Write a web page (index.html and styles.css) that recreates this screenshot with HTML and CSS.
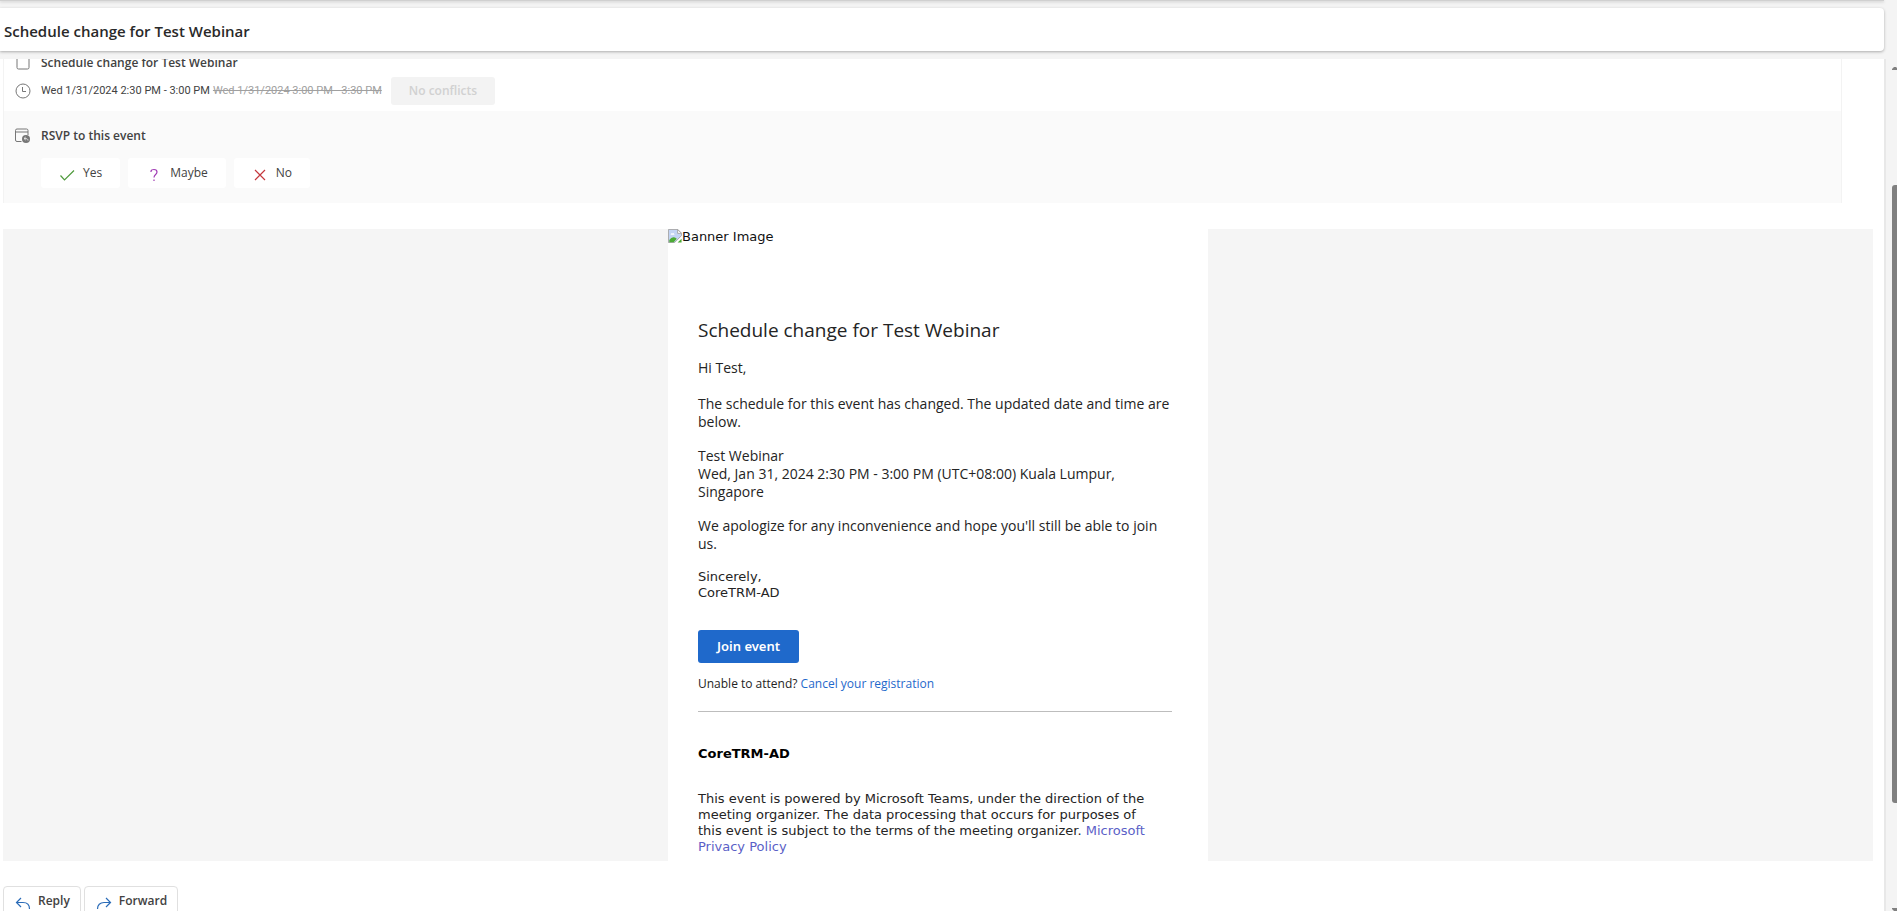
FILE: index.html
```html
<!DOCTYPE html>
<html lang="en">
<head>
<meta charset="utf-8">
<title>Schedule change for Test Webinar</title>
<link rel="stylesheet" href="styles.css">
</head>
<body>
<div class="app">
  <main class="reader">
    <div class="toolbar-edge"></div>
    <header class="subject"><h1>Schedule change for Test Webinar</h1></header>
    <section class="message">
      <div class="event">
        <div class="event-info">
          <div class="row">
            <svg class="icon" width="16" height="16" viewBox="0 0 16 16" fill="none" stroke="#777"><rect x="2" y="1.500" width="12" height="12.500" rx="1.500"/></svg>
            <strong>Schedule change for Test Webinar</strong>
          </div>
          <div class="row row-time">
            <svg class="icon" width="16" height="16" viewBox="0 0 16 16" fill="none" stroke="#777"><circle cx="8" cy="8" r="7"/><path d="M7.500 4v4.500h3.500"/></svg>
            <span class="time">Wed 1/31/2024 2:30 PM - 3:00 PM</span>
            <del class="time">Wed 1/31/2024 3:00 PM - 3:30 PM</del>
            <button class="conflicts" disabled>No conflicts</button>
          </div>
        </div>
        <div class="rsvp">
          <div class="row">
            <svg class="icon" width="16" height="16" viewBox="0 0 16 16" fill="none" stroke="#777"><path d="M6.500 13.500H2A1.500 1.500 0 0 1 .5 12V2.500A1.500 1.500 0 0 1 2 1h9.500A1.500 1.500 0 0 1 13 2.500V7M.5 4H13"/><circle cx="11" cy="11" r="4" fill="#777" stroke="none"/><path d="M13 12.500c0-1.500-1-2-3.500-2M10.700 9l-1.700 1.500 1.700 1.500" stroke="#fafafa" stroke-width=".8"/></svg>
            <strong>RSVP to this event</strong>
          </div>
          <div class="answers">
            <button class="answer"><svg width="16" height="16" viewBox="0 0 16 16" fill="none" stroke="#4f9a3c" stroke-width="1.200"><path d="M1.500 8.500l4 4.500L15 3.500"/></svg>Yes</button>
            <button class="answer"><svg width="16" height="16" viewBox="0 0 16 16" fill="none" stroke="#a03cb4" stroke-width="1.200"><path d="M5 5V4.500C5 2.900 6.300 2.500 8 2.500s3 .7 3 2.500c0 2.500-3 2.500-3 5.500M8 12.500V14"/></svg>Maybe</button>
            <button class="answer"><svg width="16" height="16" viewBox="0 0 16 16" fill="none" stroke="#c4383d" stroke-width="1.200"><path d="M3 3l10 10M13 3l-10 10"/></svg>No</button>
          </div>
        </div>
      </div>
      <div class="mail">
        <article class="letter">
          <div class="banner">
            <svg width="14" height="14" viewBox="0 0 16 16"><path d="M.5.5H11L15.500 5v2.500l-8 8h-7z" fill="#c3d4f5" stroke="#a0a0a0"/><path d="M11 .5V5h4.500z" fill="#fff" stroke="#a0a0a0"/><path d="M3 6.500q.3-2 2-1.500 1.500-1.500 2.500 1.500z" fill="#fff"/><path d="M1.500 15v-2.500Q5 7.500 10 11l-3.500 4z" fill="#4cab35"/><path d="M15.500 11v4.500H11z" fill="#4cab35"/></svg>
            <span>Banner Image</span>
          </div>
          <div class="copy">
            <h2>Schedule change for Test Webinar</h2>
            <p class="greeting">Hi Test,</p>
            <p>The schedule for this event has changed. The updated date and time are below.</p>
            <p>Test Webinar<br>Wed, Jan 31, 2024 2:30 PM - 3:00 PM (UTC+08:00) Kuala Lumpur, Singapore</p>
            <p>We apologize for any inconvenience and hope you'll still be able to join us.</p>
            <p class="signature">Sincerely,<br>CoreTRM-AD</p>
            <a class="join" href="#join">Join event</a>
            <p class="cancel">Unable to attend? <a href="#cancel">Cancel your registration</a></p>
            <hr>
            <p class="org">CoreTRM-AD</p>
            <p class="legal">This event is powered by Microsoft Teams, under the direction of the meeting organizer. The data processing that occurs for purposes of this event is subject to the terms of the meeting organizer. <a href="#privacy">Microsoft Privacy Policy</a></p>
          </div>
        </article>
      </div>
      <div class="actions">
        <button class="action"><svg width="16" height="16" viewBox="0 0 16 16" fill="none" stroke="#2b6cb8" stroke-width="1.200"><path d="M6 3L1.500 7.500 6 12M1.500 7.500H8c4 0 6.500 2.500 6.500 6.500"/></svg>Reply</button>
        <button class="action"><svg width="16" height="16" viewBox="0 0 16 16" fill="none" stroke="#2b6cb8" stroke-width="1.200"><path d="M10 3l4.500 4.500L10 12M14.500 7.500H8c-4 0-6.500 2.500-6.500 6.500"/></svg>Forward</button>
      </div>
    </section>
  </main>
  <div class="scrollbar">
    <svg width="5" height="3" viewBox="0 0 5 3"><path d="M0 3V2l2-2h2l1 1v2z" fill="#808080"/></svg>
    <div class="track"><div class="thumb"></div></div>
    <svg width="5" height="3" viewBox="0 0 5 3"><path d="M0 0v1l2 2h3V0z" fill="#808080"/></svg>
  </div>
</div>
</body>
</html>
```
FILE: styles.css
```css
* { box-sizing: border-box; }

body {
  margin: 0;
  background: #f4f4f4;
  color: #424242;
  font-family: "Open Sans", "Noto Sans", sans-serif;
  font-size: 12px;
}

h1, h2, p { margin: 0; }
button { font: inherit; color: inherit; }
a { text-decoration: none; }
strong { font-weight: 600; }
svg { flex: none; }

.app {
  display: flex;
  height: 100vh;
  overflow: hidden;
}

.reader {
  flex: 1;
  min-width: 0;
  display: flex;
  flex-direction: column;
}

.toolbar-edge {
  height: 1px;
  margin: 0 2px 7px 0;
  background: #d0d0d0;
  box-shadow: 0 1px 3px rgba(0, 0, 0, .25);
}

.subject {
  margin: 0 2px 8px 0;
  padding: 11px 4px 8px;
  background: #fff;
  border-radius: 0 4px 4px 0;
  box-shadow: 0 1px 3px rgba(0, 0, 0, .3);
}

.subject h1 {
  color: #292929;
  font-size: 15px;
  font-weight: 600;
  line-height: 24px;
}

.message {
  flex: 1;
  min-height: 0;
  overflow: hidden;
  padding: 0 11px 0 3px;
  background: #fff;
  border-right: 2px solid #e8e8e8;
}

.event {
  margin: -6px 31px 26px 0;
  border: 1px solid #f3f3f3;
  border-width: 0 1px;
}

.event-info { padding: 0 11px 6px; }

.row {
  display: flex;
  align-items: center;
  line-height: 20px;
}

.icon { margin-right: 10px; }

.row-time { height: 28px; margin-top: 4px; }
.time {
  margin-right: 3px;
  font-family: Roboto, "Open Sans", sans-serif;
  font-size: 11px;
}
del { color: #a0a0a0; }

.conflicts {
  height: 28px;
  margin-left: 6px;
  padding: 0 18px;
  background: #f3f3f3;
  border: 0;
  border-radius: 3px;
  color: #d1d1d1;
  font-weight: 600;
}

.rsvp {
  padding: 15px 11px;
  background: #fafafa;
}

.answers {
  display: flex;
  gap: 8px;
  margin: 12px 0 0 26px;
}

.answer {
  display: flex;
  align-items: center;
  gap: 8px;
  height: 30px;
  padding: 0 18px 2px;
  background: #fff;
  border: 0;
  border-radius: 3px;
}
.answer svg { margin-top: 6px; }

.mail { background: #f5f5f5; }

.letter {
  width: 540px;
  max-width: 100%;
  margin: 0 auto;
  background: #fff;
  color: #242424;
  font-size: 14px;
}

.banner {
  display: flex;
  height: 86px;
  line-height: 16px;
  color: #111;
  font-family: "DejaVu Sans", sans-serif;
  font-size: 13px;
}

.copy { padding: 0 36px 6px 30px; }

.copy h2 {
  font-size: 19px;
  font-weight: 400;
  line-height: 30px;
}

.copy p { margin-bottom: 16px; line-height: 18px; }
.copy .greeting { margin: 14px 0 18px; }

.copy .signature {
  margin-bottom: 29px;
  font-family: "DejaVu Sans", sans-serif;
  font-size: 13px;
  line-height: 16px;
}

.join {
  display: inline-block;
  padding: 0 19px;
  background: #1f69cb;
  border-radius: 3px;
  color: #fff;
  font-family: "Noto Sans", sans-serif;
  font-size: 13px;
  font-weight: 600;
  line-height: 33px;
}

.copy .cancel { margin: 12px 0 18px; font-size: 12px; }
.cancel a { color: #1f69cb; }

hr {
  height: 1px;
  margin: 0;
  border: 0;
  background: #bdbdbd;
}

.copy .org {
  margin: 33px 0 28px;
  color: #000;
  font-family: "DejaVu Sans", sans-serif;
  font-size: 13px;
  font-weight: 700;
}

.copy .legal {
  max-width: 454px;
  margin: 0;
  font-family: "DejaVu Sans", sans-serif;
  font-size: 13px;
  line-height: 16px;
}
.legal a { color: #5b5fc7; }

.actions {
  display: flex;
  gap: 3px;
  margin-top: 25px;
}

.action {
  display: flex;
  align-items: center;
  gap: 7px;
  height: 32px;
  padding: 0 10px 3px 11px;
  background: #fff;
  border: 1px solid #e0e0e0;
  border-radius: 4px;
  font-weight: 600;
}
.action svg { margin-top: 4px; }

.scrollbar {
  display: flex;
  flex-direction: column;
  justify-content: space-between;
  width: 5px;
  margin-left: 6px;
  padding-top: 67px;
}

.track { flex: 1; padding: 115px 0 105px; }
.thumb {
  height: 100%;
  background: #808080;
  border-radius: 3px 0 0 3px;
}
```
